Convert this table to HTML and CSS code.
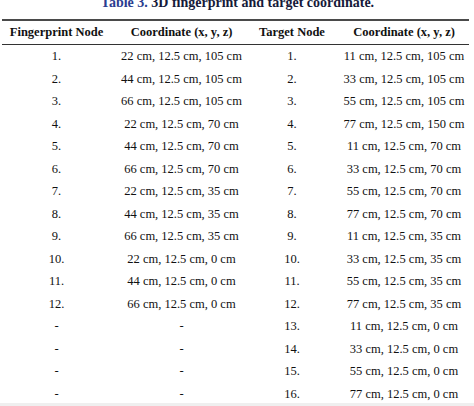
FILE: index.html
```html
<!DOCTYPE html>
<html>
<head>
<meta charset="utf-8">
<link rel="stylesheet" href="styles.css">
</head>
<body>
<div class="page">
  <div class="caption"><span class="label">Table 3.</span> 3D fingerprint and target coordinate.</div>
  <table class="data">
    <colgroup>
      <col class="c1"><col class="c2"><col class="c3"><col class="c4">
    </colgroup>
    <thead>
      <tr><th>Fingerprint Node</th><th>Coordinate (x, y, z)</th><th>Target Node</th><th class="last">Coordinate (x, y, z)</th></tr>
    </thead>
    <tbody>
      <tr><td>1.</td><td>22 cm, 12.5 cm, 105 cm</td><td>1.</td><td class="last">11 cm, 12.5 cm, 105 cm</td></tr>
      <tr><td>2.</td><td>44 cm, 12.5 cm, 105 cm</td><td>2.</td><td class="last">33 cm, 12.5 cm, 105 cm</td></tr>
      <tr><td>3.</td><td>66 cm, 12.5 cm, 105 cm</td><td>3.</td><td class="last">55 cm, 12.5 cm, 105 cm</td></tr>
      <tr><td>4.</td><td>22 cm, 12.5 cm, 70 cm</td><td>4.</td><td class="last">77 cm, 12.5 cm, 150 cm</td></tr>
      <tr><td>5.</td><td>44 cm, 12.5 cm, 70 cm</td><td>5.</td><td class="last">11 cm, 12.5 cm, 70 cm</td></tr>
      <tr><td>6.</td><td>66 cm, 12.5 cm, 70 cm</td><td>6.</td><td class="last">33 cm, 12.5 cm, 70 cm</td></tr>
      <tr><td>7.</td><td>22 cm, 12.5 cm, 35 cm</td><td>7.</td><td class="last">55 cm, 12.5 cm, 70 cm</td></tr>
      <tr><td>8.</td><td>44 cm, 12.5 cm, 35 cm</td><td>8.</td><td class="last">77 cm, 12.5 cm, 70 cm</td></tr>
      <tr><td>9.</td><td>66 cm, 12.5 cm, 35 cm</td><td>9.</td><td class="last">11 cm, 12.5 cm, 35 cm</td></tr>
      <tr><td>10.</td><td>22 cm, 12.5 cm, 0 cm</td><td>10.</td><td class="last">33 cm, 12.5 cm, 35 cm</td></tr>
      <tr><td>11.</td><td>44 cm, 12.5 cm, 0 cm</td><td>11.</td><td class="last">55 cm, 12.5 cm, 35 cm</td></tr>
      <tr><td>12.</td><td>66 cm, 12.5 cm, 0 cm</td><td>12.</td><td class="last">77 cm, 12.5 cm, 35 cm</td></tr>
      <tr><td>-</td><td>-</td><td>13.</td><td class="last">11 cm, 12.5 cm, 0 cm</td></tr>
      <tr><td>-</td><td>-</td><td>14.</td><td class="last">33 cm, 12.5 cm, 0 cm</td></tr>
      <tr><td>-</td><td>-</td><td>15.</td><td class="last">55 cm, 12.5 cm, 0 cm</td></tr>
      <tr><td>-</td><td>-</td><td>16.</td><td class="last">77 cm, 12.5 cm, 0 cm</td></tr>
    </tbody>
  </table>
</div>
</body>
</html>
```

FILE: styles.css
```css
html, body {
  margin: 0;
  padding: 0;
  background: #ffffff;
}
.page {
  width: 474px;
  height: 406px;
  overflow: hidden;
  font-family: "Liberation Serif", "Times New Roman", serif;
  color: #111;
  border-bottom: 3px solid #efefef;
  box-sizing: border-box;
}
.caption {
  margin-top: -4px;
  height: 14px;
  line-height: 14px;
  font-size: 14px;
  font-weight: bold;
  text-align: center;
  color: #161a3a;
  padding-left: 1px;
}
.caption .label {
  color: #2b3d8f;
}
.data {
  margin: 9px 0 0 2px;
  width: 467px;
  border-collapse: collapse;
  table-layout: fixed;
  font-size: 12.5px;
}
.c1 { width: 109px; }
.c2 { width: 141px; }
.c3 { width: 80px; }
.c4 { width: 137px; }
.data thead tr {
  border-top: 2px solid #4a4a4a;
  border-bottom: 1px solid #333;
}
.data th {
  font-weight: bold;
  height: 23px;
  padding: 0;
  line-height: 23px;
  text-align: center;
  white-space: nowrap;
}
.data td {
  height: 22.5px;
  padding: 0;
  line-height: 22.5px;
  text-align: center;
  white-space: nowrap;
}
.data .last {
  padding-left: 7px;
}
```
